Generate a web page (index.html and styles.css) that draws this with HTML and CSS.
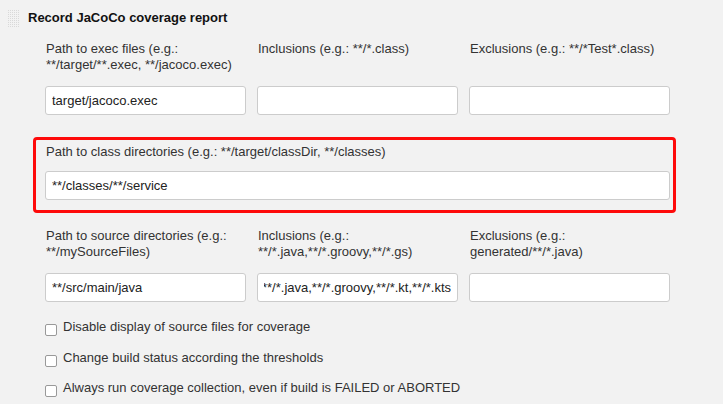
FILE: index.html
```html
<!DOCTYPE html>
<html lang="en">
<head>
<meta charset="utf-8">
<title>Record JaCoCo coverage report</title>
<link rel="stylesheet" href="styles.css">
</head>
<body>
<div class="section">
  <div class="section-header">
    <span class="grip"></span>
    <span class="section-title">Record JaCoCo coverage report</span>
  </div>

  <div class="field-row three">
    <div class="field">
      <label class="field-label">Path to exec files (e.g.: **/target/**.exec, **/jacoco.exec)</label>
      <input class="text-input" type="text" value="target/jacoco.exec">
    </div>
    <div class="field">
      <label class="field-label">Inclusions (e.g.: **/*.class)</label>
      <input class="text-input" type="text" value="">
    </div>
    <div class="field">
      <label class="field-label">Exclusions (e.g.: **/*Test*.class)</label>
      <input class="text-input" type="text" value="">
    </div>
  </div>

  <div class="highlight">
    <div class="field">
      <label class="field-label">Path to class directories (e.g.: **/target/classDir, **/classes)</label>
      <input class="text-input" type="text" value="**/classes/**/service">
    </div>
  </div>

  <div class="field-row three second">
    <div class="field">
      <label class="field-label">Path to source directories (e.g.: **/mySourceFiles)</label>
      <input class="text-input" type="text" value="**/src/main/java">
    </div>
    <div class="field">
      <label class="field-label">Inclusions (e.g.: **/*.java,**/*.groovy,**/*.gs)</label>
      <input class="text-input scroll-end" type="text" value="**/*.java,**/*.groovy,**/*.kt,**/*.kts">
    </div>
    <div class="field">
      <label class="field-label">Exclusions (e.g.: generated/**/*.java)</label>
      <input class="text-input" type="text" value="">
    </div>
  </div>

  <div class="options">
    <label class="option"><input class="check" type="checkbox"><span>Disable display of source files for coverage</span></label>
    <label class="option"><input class="check" type="checkbox"><span>Change build status according the thresholds</span></label>
    <label class="option"><input class="check" type="checkbox"><span>Always run coverage collection, even if build is FAILED or ABORTED</span></label>
  </div>
</div>
<script src="script.js"></script>
</body>
</html>
```

FILE: styles.css
```css
html, body {
  margin: 0;
  padding: 0;
  background: #f2f2f2;
}

body {
  font-family: "Liberation Sans", Arial, sans-serif;
  font-size: 13px;
  line-height: 16px;
  color: #333;
  width: 723px;
  height: 404px;
  overflow: hidden;
}

.section-header {
  display: flex;
  align-items: flex-start;
  padding: 9px 0 0 7px;
}

.grip {
  width: 13px;
  height: 18px;
  margin-right: 8px;
  background-color: #d9d9d9;
  background-image:
    linear-gradient(90deg, #f2f2f2 1px, transparent 1px),
    linear-gradient(#f2f2f2 1px, transparent 1px);
  background-size: 2px 2px;
}

.section-title {
  font-weight: bold;
  font-size: 13px;
  line-height: 16px;
  padding-top: 1px;
  color: #111;
}

.field-row {
  display: grid;
  grid-template-columns: 201px 201px 201px;
  column-gap: 11px;
  padding-left: 45px;
  margin-top: 14px;
}

.field-row.second {
  margin-top: 15px;
}

.field {
  display: flex;
  flex-direction: column;
}

.field-label {
  display: block;
  min-height: 32px;
  margin-bottom: 13px;
  padding-left: 1px;
  color: #333;
}

.highlight .field-label {
  min-height: 16px;
  margin-bottom: 11px;
}

.text-input {
  box-sizing: border-box;
  height: 29px;
  width: 100%;
  margin: 0;
  padding: 0 6px;
  border: 1px solid #cccccc;
  border-radius: 3px;
  background: #fff;
  font-family: "Liberation Sans", Arial, sans-serif;
  font-size: 13px;
  color: #222;
  outline: none;
}

.highlight {
  margin: 22px 0 0 33px;
  width: 643px;
  box-sizing: border-box;
  border: 3px solid #fe0a0a;
  border-radius: 4px;
  padding: 4px 3px 10px 9px;
}

.options {
  display: flex;
  flex-direction: column;
  gap: 13.5px;
  padding-left: 45px;
  margin-top: 17px;
}

.option {
  display: flex;
  align-items: flex-start;
  gap: 6px;
  color: #333;
}

.check {
  appearance: none;
  -webkit-appearance: none;
  box-sizing: border-box;
  width: 12px;
  height: 12px;
  margin: 5px 0 0 0;
  border: 1px solid #999;
  border-radius: 2px;
  background: #fff;
  flex: none;
}
```

FILE: script.js
```js
document.querySelectorAll('.scroll-end').forEach(function (el) {
  el.scrollLeft = el.scrollWidth;
});
```
